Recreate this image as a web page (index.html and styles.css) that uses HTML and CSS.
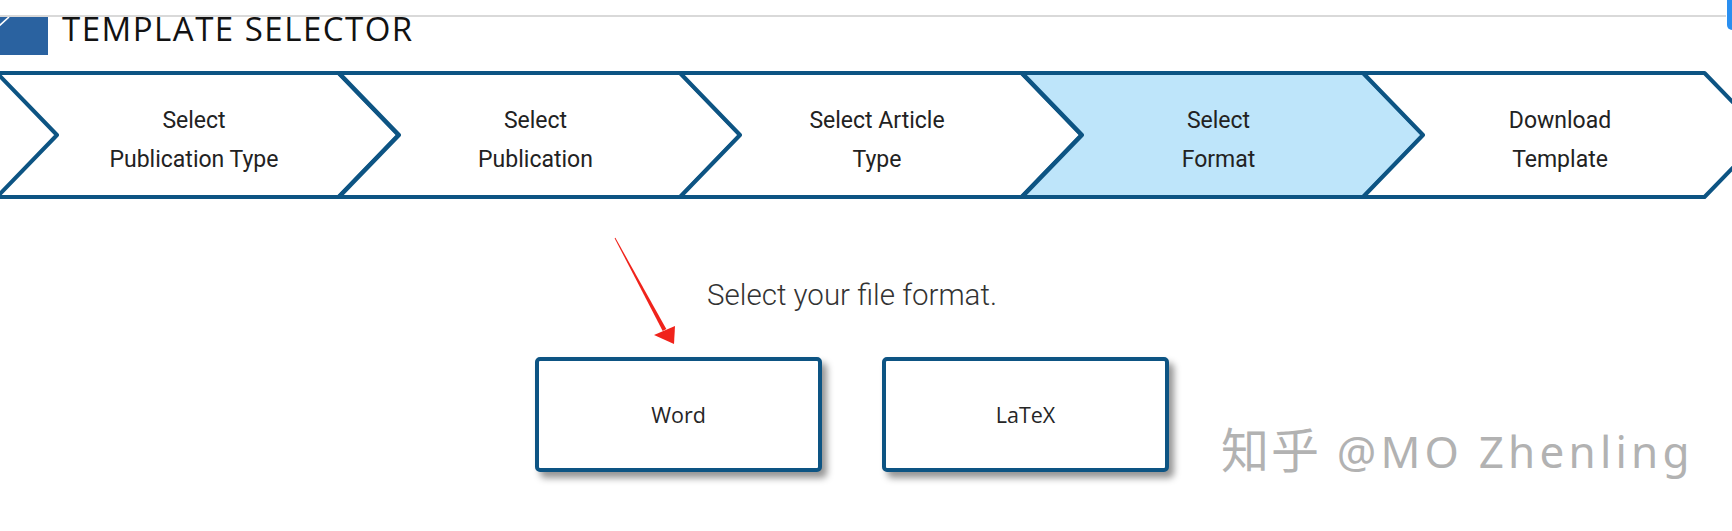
FILE: index.html
```html
<!DOCTYPE html>
<html lang="en">
<head>
<meta charset="utf-8">
<title>Template Selector</title>
<link rel="stylesheet" href="styles.css">
</head>
<body>
<div class="page">
  <div class="topbar"><span class="tab-edge"></span></div>
  <header class="header">
    <div class="logo">
      <svg width="48" height="38" viewBox="0 0 48 38"><path d="M-1 9 L9 0" stroke="#fff" stroke-width="1.6" fill="none"/></svg>
    </div>
    <h1 class="title">TEMPLATE SELECTOR</h1>
  </header>

  <nav class="steps">
    <div class="step">
      <svg class="shape" viewBox="0 0 410 128" width="410" height="128"><polygon points="3,2 344.5,2 404.5,64 344.5,126 3,126 63,64"/></svg>
      <div class="label">Select<br>Publication Type</div>
    </div>
    <div class="step">
      <svg class="shape" viewBox="0 0 410 128" width="410" height="128"><polygon points="3,2 344.5,2 404.5,64 344.5,126 3,126 63,64"/></svg>
      <div class="label">Select<br>Publication</div>
    </div>
    <div class="step">
      <svg class="shape" viewBox="0 0 410 128" width="410" height="128"><polygon points="3,2 344.5,2 404.5,64 344.5,126 3,126 63,64"/></svg>
      <div class="label">Select Article<br>Type</div>
    </div>
    <div class="step active">
      <svg class="shape" viewBox="0 0 410 128" width="410" height="128"><polygon points="3,2 344.5,2 404.5,64 344.5,126 3,126 63,64"/></svg>
      <div class="label">Select<br>Format</div>
    </div>
    <div class="step">
      <svg class="shape" viewBox="0 0 410 128" width="410" height="128"><polygon points="3,2 344.5,2 404.5,64 344.5,126 3,126 63,64"/></svg>
      <div class="label">Download<br>Template</div>
    </div>
  </nav>

  <main class="panel">
    <p class="prompt">Select your file format.</p>
    <div class="formats">
      <div class="fmt">Word</div>
      <div class="fmt">LaTeX</div>
    </div>
  </main>

  <svg class="arrow" width="70" height="115" viewBox="0 0 70 115">
    <polygon points="4.6,3.2 5.4,2.8 56.3,94.1 52.7,95.9" fill="#f0231b"/>
    <polygon points="44,100 65,91 64,109" fill="#f0231b"/>
  </svg>

  <div class="watermark"><span class="wm-cjk">知乎</span> @MO Zhenling</div>
</div>
</body>
</html>
```

FILE: styles.css
```css
html, body {
  margin: 0;
  padding: 0;
  background: #ffffff;
  overflow: hidden;
}

.page {
  position: relative;
  width: 1732px;
  height: 531px;
  overflow: hidden;
}

.topbar {
  height: 15px;
  width: 1726px;
  border-bottom: 2px solid #d9d9d9;
}

.tab-edge {
  position: absolute;
  right: 0;
  top: 0;
  width: 5px;
  height: 30px;
  background: #2a8ff0;
  border-bottom-left-radius: 5px;
}

.header {
  display: flex;
  align-items: flex-start;
  height: 38px;
}

.logo {
  width: 48px;
  height: 38px;
  background: #2a62a0;
  flex: none;
}

.logo svg {
  display: block;
}

.title {
  margin: 0 0 0 14px;
  font-family: "Open Sans", "Liberation Sans", sans-serif;
  font-weight: 500;
  font-size: 33px;
  line-height: 24px;
  letter-spacing: 1.5px;
  color: #121212;
}

.steps {
  display: flex;
  margin-top: 16px;
  margin-left: -3px;
  height: 128px;
}

.step {
  position: relative;
  flex: none;
  width: 341.5px;
  height: 128px;
}

.shape {
  position: absolute;
  left: -3px;
  top: 0;
  overflow: visible;
}

.shape polygon {
  fill: #ffffff;
  stroke: #0d5483;
  stroke-width: 4;
  stroke-linejoin: round;
}

.step.active .shape polygon {
  fill: #bee5fa;
}

.label {
  position: relative;
  width: 394px;
  padding-top: 30px;
  text-align: center;
  font-family: Roboto, "Liberation Sans", sans-serif;
  font-size: 23px;
  line-height: 39px;
  color: #222222;
}

.panel {
  width: 1704px;
  margin-top: 80px;
  text-align: center;
}

.prompt {
  margin: 0;
  font-family: Roboto, "Liberation Sans", sans-serif;
  font-weight: 300;
  font-size: 29.5px;
  line-height: 33px;
  color: #333333;
}

.formats {
  display: flex;
  justify-content: center;
  gap: 60px;
  margin-top: 45px;
}

.fmt {
  box-sizing: border-box;
  width: 287px;
  height: 115px;
  border: 4px solid #0d5483;
  border-radius: 5px;
  background: #ffffff;
  box-shadow: 5px 6px 7px rgba(0, 0, 0, 0.42);
  display: flex;
  align-items: center;
  justify-content: center;
  font-family: "Open Sans", "Liberation Sans", sans-serif;
  font-size: 21.5px;
  color: #262626;
}

.arrow {
  position: absolute;
  left: 610px;
  top: 235px;
}

.watermark {
  position: absolute;
  left: 1221px;
  top: 428px;
  font-family: "Noto Sans", "Noto Sans CJK SC", sans-serif;
  font-size: 44px;
  line-height: 44px;
  letter-spacing: 4.2px;
  color: #b2b2b2;
  white-space: nowrap;
}

.wm-cjk {
  font-size: 48px;
  line-height: 44px;
  letter-spacing: 2px;
}
```
